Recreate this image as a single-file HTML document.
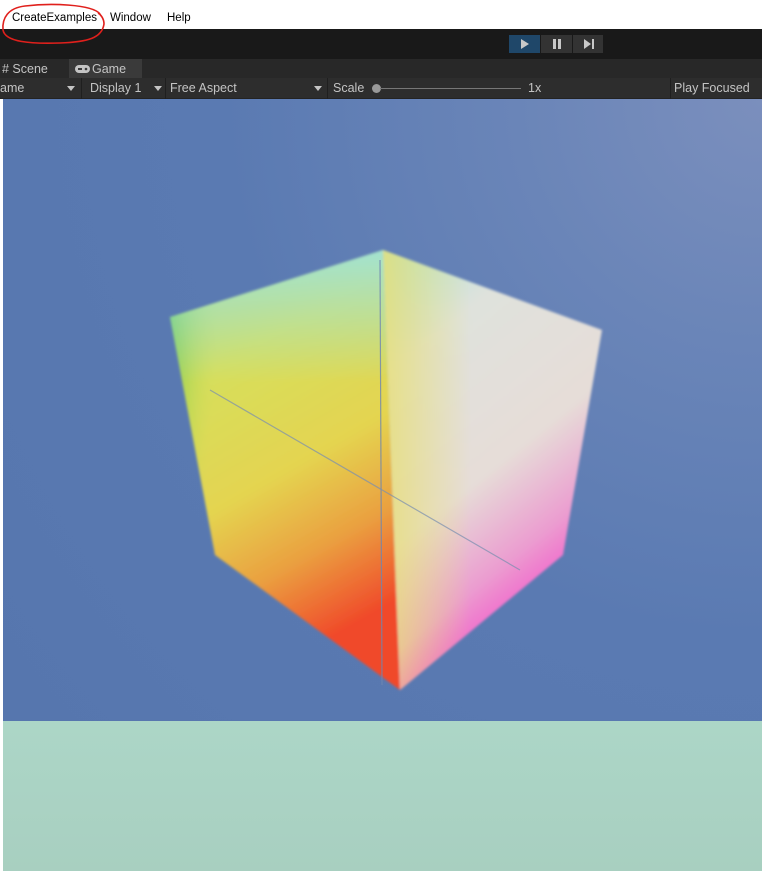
<!DOCTYPE html>
<html><head><meta charset="utf-8"><style>
body{margin:0;width:762px;height:871px;overflow:hidden;background:#fff;font-family:"Liberation Sans",sans-serif;position:relative}
.abs{position:absolute}
.menu{top:0;left:0;width:762px;height:29px;background:#fff;font-size:11.5px;color:#000}
.menu span{position:absolute;top:12px}
.tool{top:29px;left:0;width:762px;height:30px;background:#191919}
.tabs{top:59px;left:0;width:762px;height:19px;background:#282828;color:#c4c4c4;font-size:12.5px}
.gt{top:78px;left:0;width:762px;height:21px;background:#2d2d2d;color:#c4c4c4;font-size:12.5px;border-bottom:1px solid #232323;box-sizing:border-box}
.gt span{position:absolute;top:3px}
.sep{position:absolute;top:0;width:1px;height:21px;background:#1f1f1f}
.tri{position:absolute;top:8px;width:0;height:0;border-left:4px solid transparent;border-right:4px solid transparent;border-top:5px solid #c4c4c4}
</style></head><body>
<div class="abs menu"><span style="left:12px">CreateExamples</span><span style="left:110px">Window</span><span style="left:167px">Help</span></div>
<svg class="abs" style="left:0;top:0;z-index:5" width="120" height="50"><path d="M100 14 C92 4 50 3 25 6 C8 8 2 18 3 30 C5 42 30 44 60 43 C88 42 102 38 104 24 C104 18 100 14 98 13" fill="none" stroke="#e0201c" stroke-width="1.6"/></svg>
<div class="abs tool">
 <div class="abs" style="left:509px;top:6px;width:31px;height:18px;background:#1f4769"></div>
 <div class="abs" style="left:541px;top:6px;width:31px;height:18px;background:#333"></div>
 <div class="abs" style="left:573px;top:6px;width:30px;height:18px;background:#333"></div>
 <svg class="abs" style="left:509px;top:6px" width="94" height="18"><path d="M12 4 L20 9 L12 14Z" fill="#c8c8c8"/><rect x="44" y="4" width="3" height="10" fill="#c8c8c8"/><rect x="49" y="4" width="3" height="10" fill="#c8c8c8"/><path d="M75 4 L82 9 L75 14Z" fill="#c8c8c8"/><rect x="83" y="4" width="2" height="10" fill="#c8c8c8"/></svg>
</div>
<div class="abs tabs">
 <span class="abs" style="left:2px;top:3px">#&nbsp;Scene</span>
 <div class="abs" style="left:69px;top:0;width:73px;height:19px;background:#3a3a3a"></div>
 <svg class="abs" style="left:75px;top:6px" width="15" height="8"><rect x="0" y="0" width="15" height="8" rx="4" fill="#c4c4c4"/><circle cx="11" cy="4" r="1.3" fill="#3a3a3a"/><rect x="3" y="3" width="4" height="2" fill="#3a3a3a"/></svg>
 <span class="abs" style="left:92px;top:3px">Game</span>
</div>
<div class="abs gt">
 <span style="left:0">ame</span><div class="tri" style="left:67px"></div><div class="sep" style="left:81px"></div>
 <span style="left:90px">Display 1</span><div class="tri" style="left:154px"></div><div class="sep" style="left:165px"></div>
 <span style="left:170px">Free Aspect</span><div class="tri" style="left:314px"></div><div class="sep" style="left:327px"></div>
 <span style="left:333px">Scale</span>
 <div class="abs" style="left:372px;top:6px;width:9px;height:9px;border-radius:50%;background:#999"></div>
 <div class="abs" style="left:380px;top:10px;width:141px;height:1px;background:#777"></div>
 <span style="left:528px">1x</span>
 <div class="sep" style="left:670px"></div>
 <span style="left:674px">Play Focused</span>
</div>
<div class="abs" style="left:3px;top:99px;width:759px;height:622px;background:radial-gradient(circle at 100% 0%,#7b8fbd 0%,#6a85b8 25%,#5a7ab2 55%,#5676ae 100%)"></div>
<div class="abs" style="left:3px;top:721px;width:759px;height:150px;background:linear-gradient(#acd6c7,#a8cfc0)"></div>
<svg class="abs" style="left:0;top:0" width="762" height="871">
<defs>
<filter id="b"><feGaussianBlur stdDeviation="1.2"/></filter>
<linearGradient id="l1" x1="0" y1="0" x2="0.3" y2="1"><stop offset="0" stop-color="#b0e088"/><stop offset="0.3" stop-color="#d6df5c"/><stop offset="0.6" stop-color="#e4d450"/><stop offset="0.8" stop-color="#eaa040"/><stop offset="1" stop-color="#f04a2a"/></linearGradient>
<linearGradient id="l2" x1="0" y1="0" x2="1" y2="0.2"><stop offset="0" stop-color="#33b840" stop-opacity="0.7"/><stop offset="0.25" stop-color="#c8dc58" stop-opacity="0"/></linearGradient>
<linearGradient id="l3" x1="0" y1="0" x2="0" y2="1"><stop offset="0" stop-color="#9ee2dc" stop-opacity="0.9"/><stop offset="0.3" stop-color="#9ee2dc" stop-opacity="0"/></linearGradient>
<linearGradient id="r1" x1="0" y1="0" x2="0.4" y2="1"><stop offset="0" stop-color="#a8e4dc"/><stop offset="0.25" stop-color="#dfe2dc"/><stop offset="0.6" stop-color="#e6ddd8"/><stop offset="1" stop-color="#f060c8"/></linearGradient>
<linearGradient id="r2" x1="0" y1="0" x2="1" y2="0"><stop offset="0" stop-color="#e8df70" stop-opacity="0.8"/><stop offset="0.4" stop-color="#e8df70" stop-opacity="0"/></linearGradient>
<linearGradient id="r3" x1="0.6" y1="0" x2="1" y2="1"><stop offset="0.6" stop-color="#ff40d0" stop-opacity="0"/><stop offset="1" stop-color="#ff30d0" stop-opacity="0.9"/></linearGradient>
</defs>
<g filter="url(#b)">
<polygon points="170,317 383,250 400,690 215,555" fill="url(#l1)"/>
<polygon points="170,317 383,250 400,690 215,555" fill="url(#l2)"/>
<polygon points="170,317 383,250 400,690 215,555" fill="url(#l3)"/>
<polygon points="383,250 602,330 563,555 400,690" fill="url(#r1)"/>
<polygon points="383,250 602,330 563,555 400,690" fill="url(#r2)"/>
<polygon points="383,250 602,330 563,555 400,690" fill="url(#r3)"/>
</g>
<line x1="380" y1="260" x2="382" y2="685" stroke="#6f86b0" stroke-width="1.2" opacity="0.8"/>
<line x1="210" y1="390" x2="520" y2="570" stroke="#7a8fb0" stroke-width="1.2" opacity="0.7"/>
</svg>
</body></html>
